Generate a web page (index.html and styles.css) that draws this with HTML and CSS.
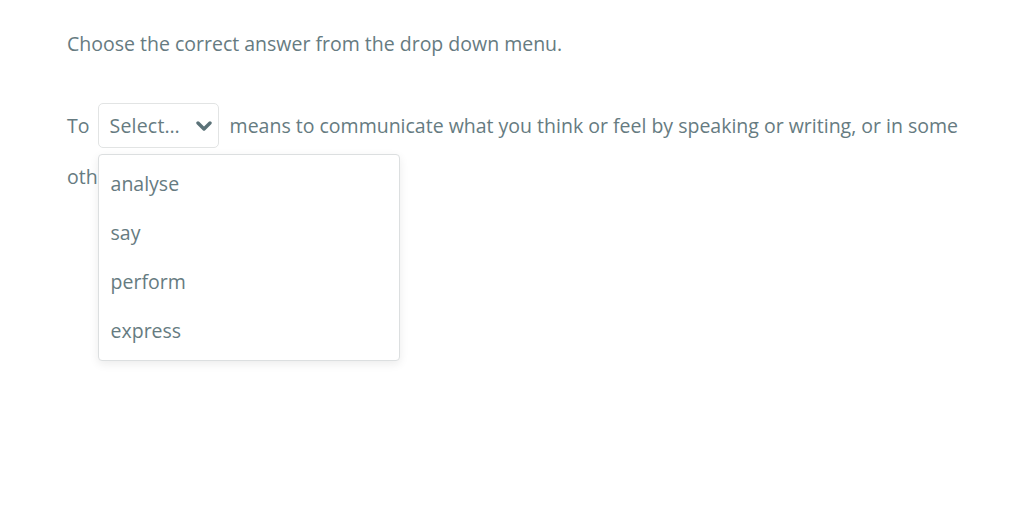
FILE: index.html
```html
<!DOCTYPE html>
<html lang="en">
<head>
<meta charset="utf-8">
<title>Drop down question</title>
<link rel="stylesheet" href="styles.css">
</head>
<body>
<main class="question">
  <p class="instructions">Choose the correct answer from the drop down menu.</p>
  <div class="sentence">To <span class="select-wrap"><span class="select"><span class="select-label">Select…</span><svg class="chevron" viewBox="0 0 16 10" width="16" height="10" aria-hidden="true"><path d="M2 2 L8 8 L14 2" fill="none" stroke="currentColor" stroke-width="3.4" stroke-linecap="round" stroke-linejoin="round"/></svg></span><span class="menu" role="listbox"><span class="option" role="option">analyse</span><span class="option" role="option">say</span><span class="option" role="option">perform</span><span class="option" role="option">express</span></span></span> means to communicate what you think or feel by speaking or writing, or in some other way.</div>
</main>
</body>
</html>
```
FILE: styles.css
```css
html, body {
  margin: 0;
  padding: 0;
  background: #ffffff;
}

body {
  min-height: 508px;
  font-family: "Open Sans", "Noto Sans", "Liberation Sans", sans-serif;
  font-size: 19.5px;
  color: #667b81;
}

.question {
  padding: 26px 30px 0 67px;
}

.instructions {
  margin: 0;
  line-height: 36px;
}

.sentence {
  margin: 39px 0 0;
  line-height: 50px;
}

.select-wrap {
  position: relative;
  display: inline-block;
  vertical-align: middle;
  margin: 0 6px 4px 3px;
  line-height: 1;
}

.select {
  box-sizing: border-box;
  display: inline-flex;
  align-items: center;
  height: 45px;
  width: 121px;
  padding: 0 6px 0 11px;
  border: 1px solid #e2e4e4;
  border-radius: 5px;
  background: #fff;
  vertical-align: middle;
}

.select-label {
  letter-spacing: 0.2px;
}

.chevron {
  margin-left: auto;
  color: #5b7278;
  flex: none;
}

.menu {
  position: absolute;
  top: 51px;
  left: 0;
  box-sizing: border-box;
  display: block;
  width: 302px;
  padding: 4px 0 5px;
  background: #fff;
  border: 1px solid #dcdfe0;
  border-radius: 4px;
  box-shadow: 0 3px 10px rgba(0, 0, 0, 0.08);
  z-index: 2;
}

.option {
  display: block;
  height: 49px;
  line-height: 49px;
  padding-left: 12px;
}
```
